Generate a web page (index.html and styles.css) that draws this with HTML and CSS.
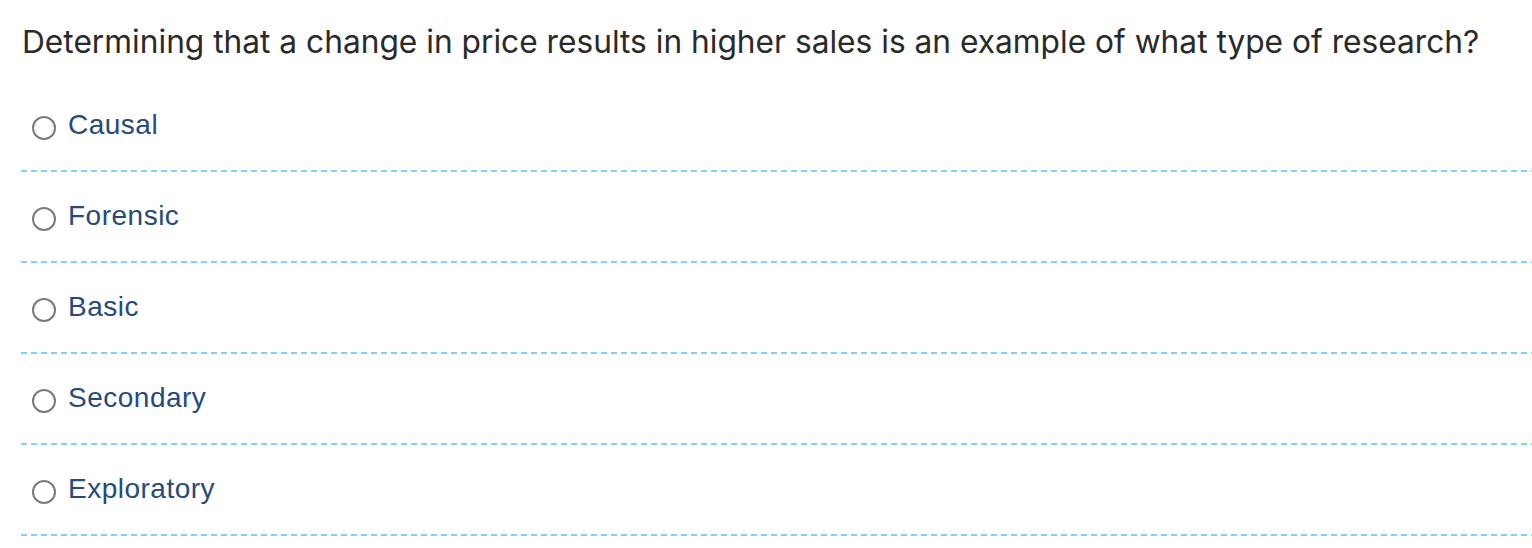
FILE: index.html
```html
<!DOCTYPE html>
<html lang="en">
<head>
<meta charset="utf-8">
<title>Question</title>
<link rel="stylesheet" href="styles.css">
</head>
<body>
<div class="quiz">
  <h1 class="question">Determining that a change in price results in higher sales is an example of what type of research?</h1>
  <ul class="options">
    <li class="option"><span class="radio"></span><span class="label">Causal</span></li>
    <li class="option"><span class="radio"></span><span class="label">Forensic</span></li>
    <li class="option"><span class="radio"></span><span class="label">Basic</span></li>
    <li class="option"><span class="radio"></span><span class="label">Secondary</span></li>
    <li class="option"><span class="radio"></span><span class="label">Exploratory</span></li>
  </ul>
</div>
</body>
</html>
```

FILE: styles.css
```css
html, body {
  margin: 0;
  padding: 0;
  background: #ffffff;
}

.quiz {
  padding: 0 0 0 21px;
}

.question {
  margin: 0;
  padding: 22px 0 0 1px;
  font-family: Inter, "Liberation Sans", sans-serif;
  font-weight: 400;
  font-size: 31.7px;
  line-height: 40px;
  color: #2a2a2a;
  letter-spacing: 0;
  white-space: nowrap;
}

.options {
  list-style: none;
  margin: 19px 0 0 0;
  padding: 0;
}

.option {
  padding: 27px 0 28px 0;
  height: 34px;
  border-bottom: 2px solid transparent;
  background-image: repeating-linear-gradient(to right, #7fd0fa 0 6px, transparent 6px 10px);
  background-size: 100% 2px;
  background-repeat: no-repeat;
  background-position: 0 100%;
  background-origin: border-box;
  font-family: "Liberation Sans", Arial, sans-serif;
  font-size: 28px;
  line-height: 34px;
  color: #264a7a;
  white-space: nowrap;
}

.radio {
  display: inline-block;
  box-sizing: border-box;
  width: 24px;
  height: 24px;
  margin: 0 12px 0 11px;
  border: 2px solid #7a7a7a;
  border-radius: 50%;
  vertical-align: -6px;
}

.label {
  display: inline-block;
  letter-spacing: 0.5px;
}
```
